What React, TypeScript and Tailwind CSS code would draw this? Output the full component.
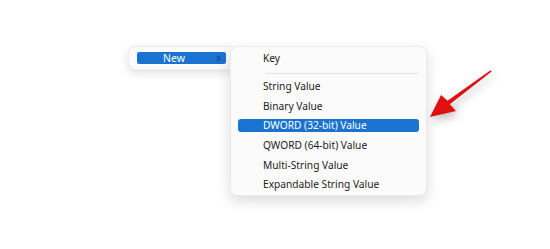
import React from 'react';

const items = [
  'String Value',
  'Binary Value',
  'DWORD (32-bit) Value',
  'QWORD (64-bit) Value',
  'Multi-String Value',
  'Expandable String Value',
];

const selected = 'DWORD (32-bit) Value';

export default function App() {
  return (
    <div
      className="relative w-[550px] h-[249px] bg-white overflow-hidden text-[10.2px] text-[#1b1b1b]"
      style={{ fontFamily: '"Segoe UI", "Noto Sans", sans-serif' }}
    >
      <div className="flex items-start pl-[128px] pt-[46px]">
        {/* parent menu */}
        <div className="w-[104px] h-[24px] flex items-center pl-[8px] pr-[6px] bg-[#fbfbfb] rounded-l-[7px] border border-r-0 border-[#ececec] shadow-[0_3px_10px_rgba(0,0,0,0.12)]">
          <div className="flex items-center w-[90px] h-[12px] rounded-[2px] bg-[#1a73d1] text-white pl-[26px] pr-[5px]">
            <span className="flex-1 leading-none text-[10.5px]">New</span>
            <svg width="5" height="7" viewBox="0 0 5 7" className="text-[#1c3f66]">
              <path d="M1 0.8 L3.7 3.5 L1 6.2" fill="none" stroke="currentColor" strokeWidth="1.1" />
            </svg>
          </div>
        </div>

        {/* sub menu */}
        <div className="-ml-[2px] z-10 w-[197px] h-[150px] pt-[2px] bg-[#fbfbfb] rounded-[7px] border border-[#ececec] shadow-[0_5px_14px_rgba(0,0,0,0.14)]">
          <div className="h-[20px] flex items-center pl-[32px]">Key</div>
          <div className="h-[8px] flex items-center pl-[34px] pr-[7px]">
            <div className="h-px w-full bg-[#e3e3e3]" />
          </div>
          {items.map((item) => (
            <div key={item} className="h-[19.6px] flex items-center px-[7px]">
              <div
                className={`flex items-center w-full h-[13px] rounded-[3px] pl-[25px] ${
                  item === selected ? 'bg-[#1a73d1] text-white' : ''
                }`}
              >
                {item}
              </div>
            </div>
          ))}
        </div>
      </div>

      {/* red annotation arrow */}
      <svg
        className="absolute left-0 top-0 pointer-events-none"
        width="550"
        height="249"
        viewBox="0 0 550 249"
        style={{ filter: 'drop-shadow(2px 4px 4px rgba(0,0,0,0.25))' }}
      >
        <polygon
          points="490.6,70.2 447.5,100.8 441,95 430,117 456,111 449.8,104.2 491.6,71.6"
          fill="#e10f10"
        />
      </svg>
    </div>
  );
}
